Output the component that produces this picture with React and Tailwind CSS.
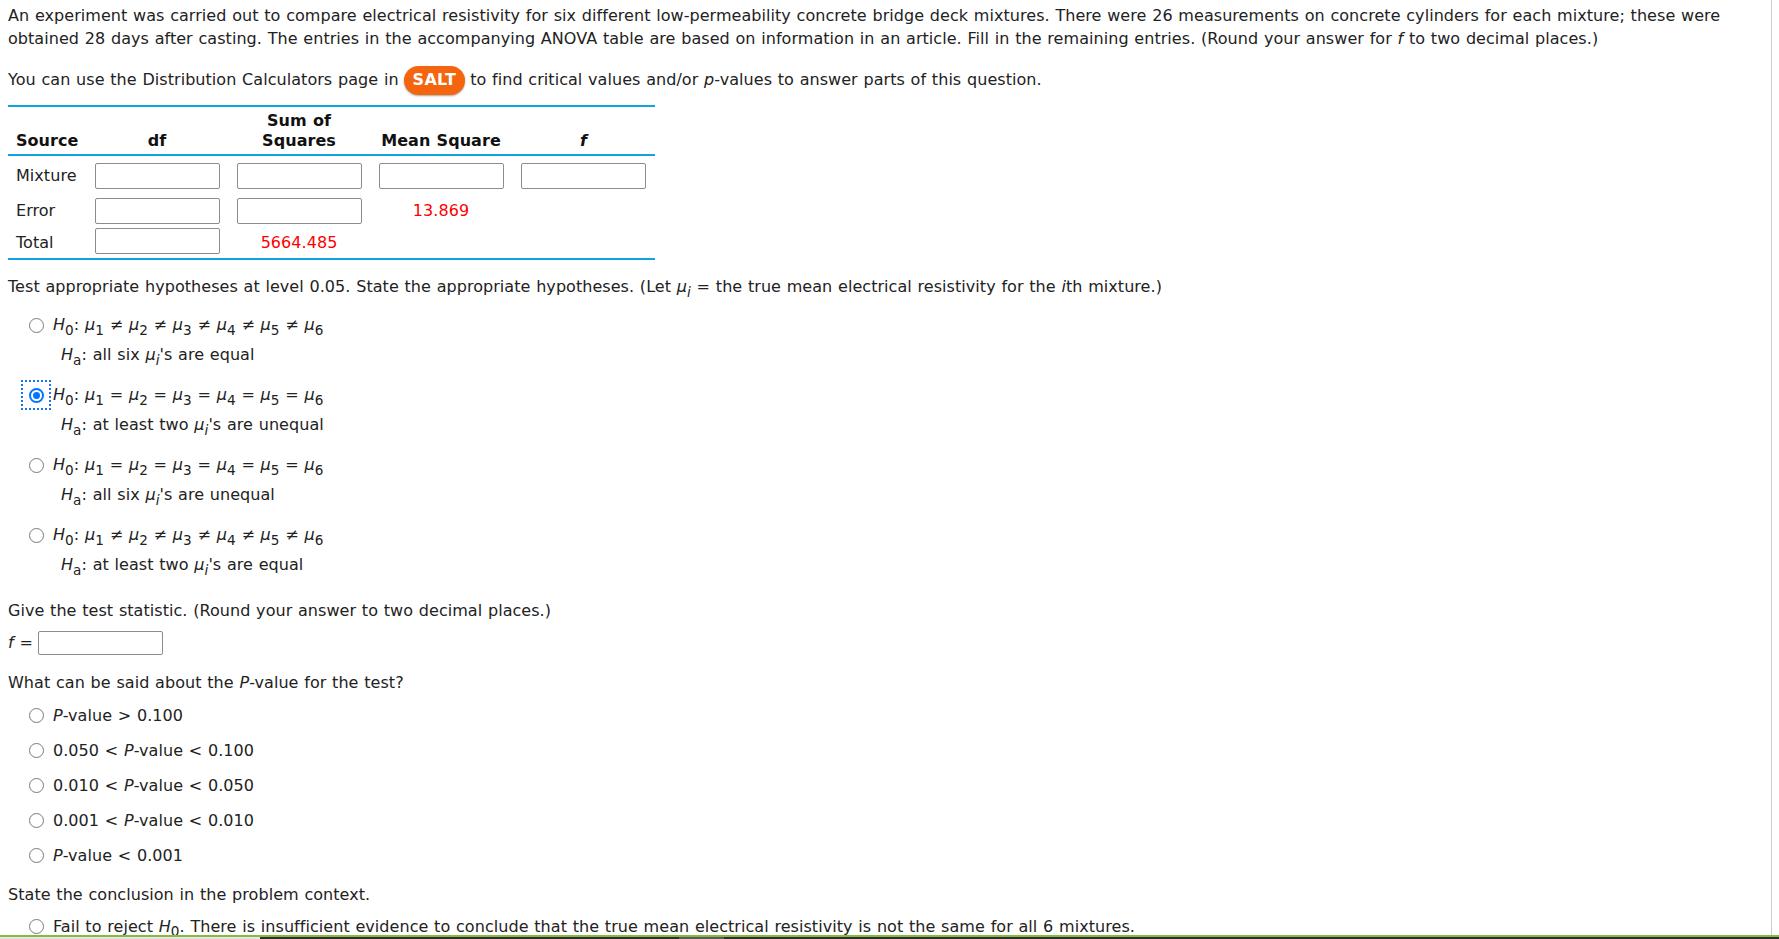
import React from "react";

const Sub = ({ children, italic }) => (
  <sub className={italic ? "bottom-[-0.35em] text-[85%] italic" : "bottom-[-0.35em] text-[85%] not-italic"}>
    {children}
  </sub>
);

const Mu = ({ n, italicSub }) => (
  <span>
    <i>μ</i>
    <Sub italic={italicSub}>{n}</Sub>
  </span>
);

const H = ({ s }) => (
  <span>
    <i>H</i>
    <Sub>{s}</Sub>
  </span>
);

const Radio = ({ checked, focus }) => (
  <span
    className={
      focus
        ? "flex h-[30px] w-[30px] shrink-0 items-center justify-center border-2 border-dotted border-[#1a73e8]"
        : "flex h-[30px] w-[30px] shrink-0 items-center justify-center border-2 border-transparent"
    }
  >
    {checked ? (
      <span className="flex h-[15px] w-[15px] items-center justify-center rounded-full border-2 border-[#0075ff] bg-white">
        <span className="h-[7px] w-[7px] rounded-full bg-[#0075ff]" />
      </span>
    ) : (
      <span className="h-[15px] w-[15px] rounded-full border border-[#7a7a7a] bg-white" />
    )}
  </span>
);

const Input = ({ w = "w-[125px]", h = "h-[26px]" }) => (
  <input
    type="text"
    className={`${w} ${h} rounded-[2px] border border-[#8c8c8c] bg-white px-1 outline-none`}
  />
);

const H0Line = ({ op }) => (
  <span>
    <H s="0" />: <Mu n="1" /> {op} <Mu n="2" /> {op} <Mu n="3" /> {op} <Mu n="4" /> {op}{" "}
    <Mu n="5" /> {op} <Mu n="6" />
  </span>
);

const Hypothesis = ({ op, ha, checked, focus }) => (
  <div className="flex items-start pl-[13px]">
    <span className="-mt-[2px]">
      <Radio checked={checked} focus={focus} />
    </span>
    <div className="ml-[2px]">
      <div className="leading-[26px]">
        <H0Line op={op} />
      </div>
      <div className="pl-[8px] pt-[3px] leading-[27px]">
        <H s="a" />: {ha[0]} <Mu n="i" italicSub />
        's {ha[1]}
      </div>
    </div>
  </div>
);

const POption = ({ children }) => (
  <div className="flex h-[35px] items-center pl-[13px]">
    <Radio />
    <span className="ml-[2px]">{children}</span>
  </div>
);

export default function App() {
  const blue = "border-[#10a3e3]";
  return (
    <div className="relative h-[939px] w-[1779px] overflow-hidden bg-white font-['DejaVu_Sans',Verdana,sans-serif] text-[16px] tracking-[0.05px] text-[#222] [word-spacing:0.6px]">
      <div className="h-full w-[1772px] border-r border-[#cccccc] pl-[8px] pr-[10px]">
        <p className="pt-[4px] leading-[23px]">
          An experiment was carried out to compare electrical resistivity for six different low-permeability
          concrete bridge deck mixtures. There were 26 measurements on concrete cylinders for each mixture; these
          were obtained 28 days after casting. The entries in the accompanying ANOVA table are based on information
          in an article. Fill in the remaining entries. (Round your answer for <i>f</i> to two decimal places.)
        </p>

        <div className="mt-[15px] flex h-[30px] items-center">
          <span>You can use the Distribution Calculators page in</span>
          <span className="mx-[5px] flex h-[29px] items-center rounded-full bg-[#f5640f] px-[9px] font-bold tracking-[0.3px] text-white shadow-[0_1px_2px_rgba(0,0,0,0.35)]">
            SALT
          </span>
          <span>
            to find critical values and/or <i>p</i>-values to answer parts of this question.
          </span>
        </div>

        <div className={`mt-[10px] w-[647px] border-y-2 ${blue}`}>
          <div
            className={`grid grid-cols-[78px_142px_142px_142px_143px] items-end border-b-2 ${blue} pt-[4px] pb-[3px] font-bold leading-[20px] text-[#111]`}
          >
            <div className="pl-[8px]">Source</div>
            <div className="text-center">df</div>
            <div className="text-center">
              Sum of
              <br />
              Squares
            </div>
            <div className="text-center">Mean Square</div>
            <div className="text-center italic">f</div>
          </div>
          <div className="pt-[3px]">
            <div className="grid h-[34px] grid-cols-[78px_142px_142px_142px_143px] items-center">
              <div className="pl-[8px]">Mixture</div>
              <div className="flex justify-center">
                <Input />
              </div>
              <div className="flex justify-center">
                <Input />
              </div>
              <div className="flex justify-center">
                <Input />
              </div>
              <div className="flex justify-center">
                <Input />
              </div>
            </div>
            <div className="grid h-[35px] grid-cols-[78px_142px_142px_142px_143px] items-center">
              <div className="pl-[8px]">Error</div>
              <div className="flex justify-center">
                <Input />
              </div>
              <div className="flex justify-center">
                <Input />
              </div>
              <div className="text-center text-[#ff0000]">13.869</div>
              <div />
            </div>
            <div className="grid h-[30px] grid-cols-[78px_142px_142px_142px_143px] items-start">
              <div className="pl-[8px] pt-[3px]">Total</div>
              <div className="flex justify-center">
                <Input />
              </div>
              <div className="pt-[3px] text-center text-[#ff0000]">5664.485</div>
              <div />
              <div />
            </div>
          </div>
        </div>

        <p className="mt-[15px] leading-[23px]">
          Test appropriate hypotheses at level 0.05. State the appropriate hypotheses. (Let <Mu n="i" italicSub /> =
          the true mean electrical resistivity for the <i>i</i>th mixture.)
        </p>

        <div className="mt-[14px] flex flex-col gap-[14px]">
          <Hypothesis op="≠" ha={["all six", "are equal"]} />
          <Hypothesis op="=" ha={["at least two", "are unequal"]} checked focus />
          <Hypothesis op="=" ha={["all six", "are unequal"]} />
          <Hypothesis op="≠" ha={["at least two", "are equal"]} />
        </div>

        <p className="mt-[21px] leading-[23px]">Give the test statistic. (Round your answer to two decimal places.)</p>
        <div className="mt-[9px] flex h-[24px] items-center">
          <span>
            <i>f</i> =
          </span>
          <span className="ml-[5px]">
            <Input h="h-[24px]" />
          </span>
        </div>

        <p className="mt-[16px] leading-[23px]">
          What can be said about the <i>P</i>-value for the test?
        </p>
        <div className="mt-[4px]">
          <POption>
            <i>P</i>-value &gt; 0.100
          </POption>
          <POption>
            0.050 &lt; <i>P</i>-value &lt; 0.100
          </POption>
          <POption>
            0.010 &lt; <i>P</i>-value &lt; 0.050
          </POption>
          <POption>
            0.001 &lt; <i>P</i>-value &lt; 0.010
          </POption>
          <POption>
            <i>P</i>-value &lt; 0.001
          </POption>
        </div>

        <p className="mt-[10px] leading-[23px]">State the conclusion in the problem context.</p>
        <div className="mt-[3px]">
          <POption>
            Fail to reject <H s="0" />. There is insufficient evidence to conclude that the true mean electrical
            resistivity is not the same for all 6 mixtures.
          </POption>
        </div>
      </div>

      <div className="absolute bottom-0 left-0 w-full">
        <div className="h-[2px] bg-[#86bc3d]" />
        <div className="flex h-[2px]">
          <div className="w-[260px] bg-[#e4e4e4]" />
          <div className="flex flex-1 bg-[#2e2e2e]">
            <div className="ml-[419px] w-[45px] bg-[#5a5a5a]" />
          </div>
        </div>
      </div>
    </div>
  );
}
